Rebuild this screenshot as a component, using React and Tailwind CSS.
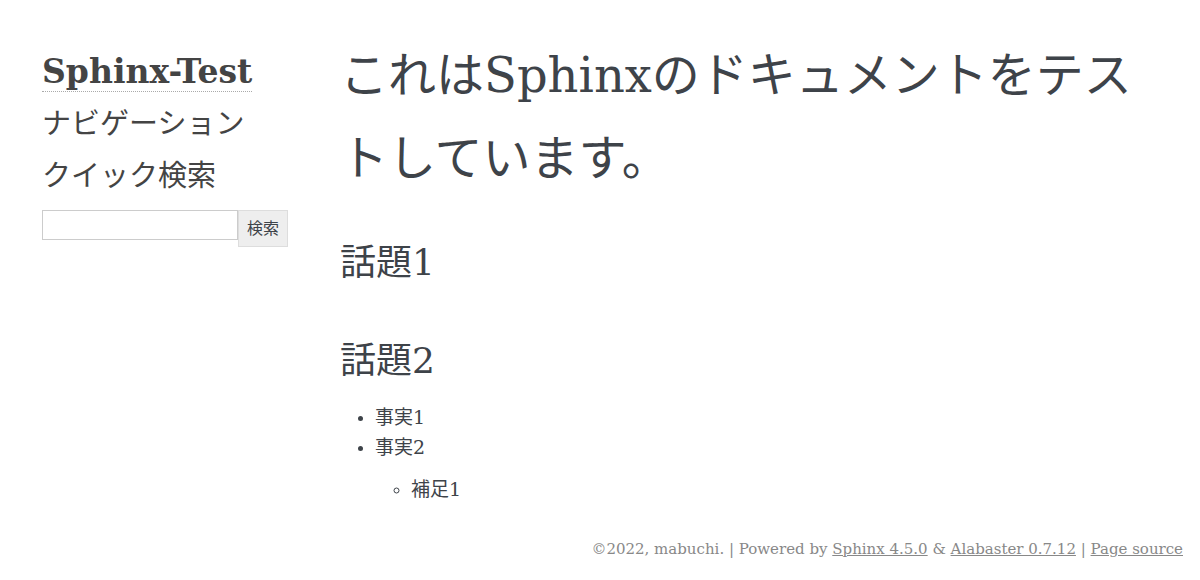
export default function App() {
  return (
    <div className="min-h-[580px] w-[1200px] bg-white font-['DejaVu_Serif','Noto_Sans_CJK_JP',serif] text-[#3E4349]">
      <div className="flex">
        {/* sidebar */}
        <aside className="ml-[42px] w-[250px] shrink-0 pt-[53px]">
          <h1 className="m-0">
            <a
              href="#"
              className="inline-block border-b border-dotted border-[#aaa] text-[33px] font-bold leading-[38px] text-[#444]"
            >
              Sphinx-Test
            </a>
          </h1>
          <h3 className="mt-[12px] text-[29px] leading-[40px] text-[#444]">ナビゲーション</h3>
          <h3 className="mt-[12px] text-[29px] leading-[40px] text-[#444]">クイック検索</h3>
          <form className="mt-[14px] flex items-start">
            <input
              type="text"
              className="h-[30px] w-[196px] border border-[#ccc] bg-white px-1 text-[16px] outline-none"
            />
            <button
              type="button"
              className="h-[37px] w-[50px] border border-[#ddd] bg-[#eee] text-[16px] text-[#3E4349]"
            >
              検索
            </button>
          </form>
        </aside>

        {/* main body */}
        <main className="ml-[48px] mr-[17px] flex-1 pt-[34px]">
          <h1 className="max-w-[815px] text-[48px] font-normal leading-[83px]">
            これはSphinxのドキュメントをテストしています。
          </h1>

          <section className="mt-[39px]">
            <h2 className="text-[36px] font-normal leading-[48px]">話題1</h2>
          </section>

          <section className="mt-[50px]">
            <h2 className="text-[36px] font-normal leading-[48px]">話題2</h2>
            <ul className="mt-[17px] list-disc pl-[35px] text-[19px] leading-[30px] marker:text-[16px]">
              <li>事実1</li>
              <li>
                事実2
                <ul className="mt-[12px] list-[circle] pl-[36px]">
                  <li>補足1</li>
                </ul>
              </li>
            </ul>
          </section>
        </main>
      </div>

      <footer className="mr-[17px] mt-[33px] text-right text-[15px] leading-[24px] text-[#888]">
        ©2022, mabuchi. | Powered by{" "}
        <a href="#" className="underline">Sphinx 4.5.0</a> &amp;{" "}
        <a href="#" className="underline">Alabaster 0.7.12</a> |{" "}
        <a href="#" className="underline">Page source</a>
      </footer>
    </div>
  );
}
